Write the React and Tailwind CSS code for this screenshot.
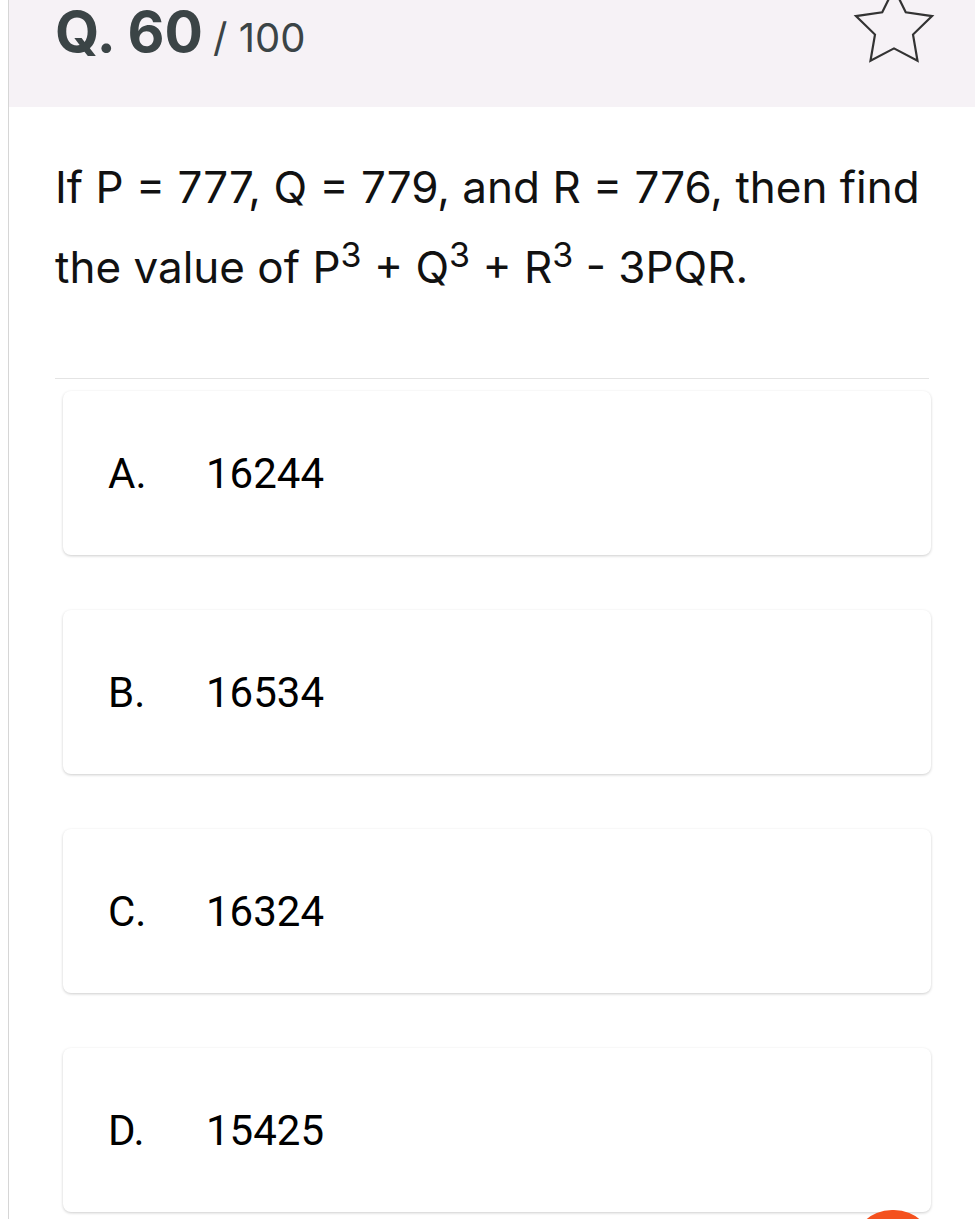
import React from 'react';

const options = [
  { label: 'A.', value: '16244' },
  { label: 'B.', value: '16534' },
  { label: 'C.', value: '16324' },
  { label: 'D.', value: '15425' },
];

// outline star, top tip runs off the top of the screen
const StarIcon = () => (
  <svg width="92" height="80" viewBox="0 0 92 80" fill="none">
    <path
      d="M46 3.4 L57.76 27.22 L84.04 31.04 L65.02 49.58 L69.51 75.76 L46 63.4 L22.49 75.76 L26.98 49.58 L7.96 31.04 L34.24 27.22 Z"
      stroke="#333"
      strokeWidth="2.2"
    />
  </svg>
);

const Sup = ({ children }) => (
  <span className="align-[16px] text-[34px] leading-none">{children}</span>
);

const OptionCard = ({ label, value }) => (
  <div
    className="flex h-[164px] items-center rounded-lg bg-white pl-[45px] shadow-[0_1px_3px_rgba(0,0,0,0.2)]"
    style={{ fontFamily: 'Roboto, "Liberation Sans", sans-serif' }}
  >
    <span className="w-[98px] text-[42px] text-black">{label}</span>
    <span className="text-[42px] text-black">{value}</span>
  </div>
);

export default function App() {
  return (
    <div
      className="relative h-[1219px] w-[975px] overflow-hidden bg-white"
      style={{ fontFamily: 'Inter, Roboto, "Liberation Sans", sans-serif' }}
    >
      <div className="ml-[8px] h-full border-l border-[#d6d6d6]">
        <div className="flex h-[107px] items-start justify-between bg-[#f6f2f6] pl-[46px] pr-[35px]">
          <div className="flex items-baseline pt-[3px] text-[#3b4446]">
            <span className="text-[57px] font-bold leading-none">Q. 60</span>
            <span className="ml-[10px] text-[40px] leading-none">/ 100</span>
          </div>
          <div className="-mt-[15px]">
            <StarIcon />
          </div>
        </div>

        <div className="px-[46px] pt-[40px]">
          <p className="text-[44px] leading-[80px] text-[#111]">
            If P = 777, Q = 779, and R = 776, then find the value of P<Sup>3</Sup> + Q<Sup>3</Sup> + R
            <Sup>3</Sup> - 3PQR.
          </p>
        </div>

        <div className="mx-[46px] mt-[71px] border-t border-[#e4e4e4]" />

        <div className="flex flex-col gap-[55px] pl-[54px] pr-[44px] pt-[12px]">
          {options.map((o) => (
            <OptionCard key={o.label} label={o.label} value={o.value} />
          ))}
        </div>
      </div>

      <div className="absolute left-[852px] top-[1210px] h-[80px] w-[82px] rounded-full bg-[#f4511e]" />
    </div>
  );
}
